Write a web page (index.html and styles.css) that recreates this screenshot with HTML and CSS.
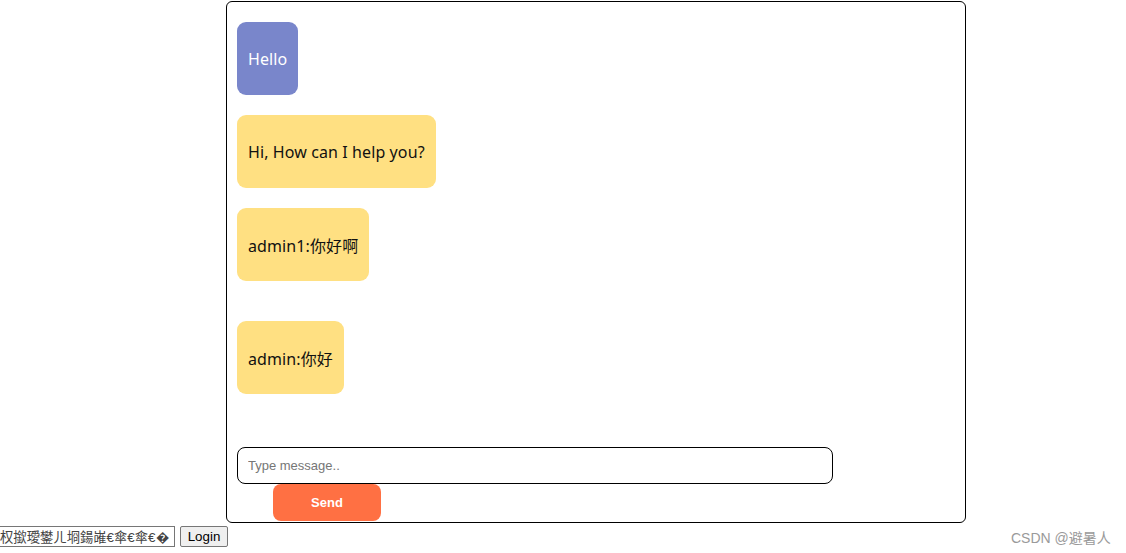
FILE: index.html
```html
<!DOCTYPE html>
<html>
<head>
<meta charset="utf-8">
<link rel="stylesheet" href="styles.css">
</head>
<body>
<div class="chat">
  <div class="msg bot">Hello</div>
  <div class="msg user">Hi, How can I help you?</div>
  <div class="msg user">admin1:你好啊</div>
  <div class="msg user far">admin:你好</div>
  <input class="typebox" type="text" placeholder="Type message..">
  <button class="send">Send</button>
</div>
<div class="login">
  <input class="name" type="text" value="权撳璦鐢ㄦ埛鍚嶉€傘€傘€�">
  <button class="loginbtn">Login</button>
</div>
<div class="mark">CSDN @避暑人</div>
</body>
</html>
```
FILE: styles.css
```css
html, body {
  margin: 0;
  padding: 0;
  background: #fff;
}
body {
  position: relative;
  width: 1126px;
  height: 553px;
  overflow: hidden;
  font-family: "Noto Sans", "Noto Sans CJK SC", sans-serif;
}
.chat {
  box-sizing: border-box;
  width: 740px;
  height: 522px;
  margin: 1px 0 0 226px;
  border: 1px solid #000;
  border-radius: 6px;
  padding: 0 10px;
  display: flex;
  flex-direction: column;
  align-items: flex-start;
}
.msg {
  box-sizing: border-box;
  height: 73px;
  margin-top: 20px;
  padding: 0 11px;
  border-radius: 9px;
  display: flex;
  align-items: center;
  font-size: 16px;
  letter-spacing: 0.1px;
  color: #111;
  white-space: nowrap;
}
.msg.bot {
  background: #7986cb;
  color: #fff;
}
.msg.user {
  background: #ffe082;
}
.msg.far {
  margin-top: 40px;
}
.typebox {
  box-sizing: border-box;
  width: 596px;
  height: 37px;
  margin-top: 53px;
  border: 1px solid #000;
  border-radius: 8px;
  padding: 0 10px;
  font-family: "Liberation Sans", Arial, sans-serif;
  font-size: 13px;
  outline: none;
}
.typebox::placeholder {
  color: #767676;
}
.send {
  box-sizing: border-box;
  width: 108px;
  height: 37px;
  margin-left: 36px;
  border: none;
  border-radius: 8px;
  background: #ff7043;
  color: #fff;
  font-family: "Liberation Sans", Arial, sans-serif;
  font-size: 13px;
  font-weight: bold;
}
.login {
  display: flex;
  align-items: center;
  gap: 5px;
  margin-top: 3px;
}
.name {
  box-sizing: border-box;
  width: 178px;
  height: 21px;
  margin-left: -3px;
  border: 1px solid #767676;
  padding: 1px 2px;
  font-family: "Liberation Sans", "Noto Sans CJK SC", sans-serif;
  font-size: 13.33px;
  color: #444;
}
.loginbtn {
  box-sizing: border-box;
  height: 21px;
  width: 48px;
  padding: 0 6px;
  border: 1px solid #767676;
  border-radius: 2px;
  background: #efefef;
  font-family: "Liberation Sans", Arial, sans-serif;
  font-size: 13.33px;
  color: #000;
}
.mark {
  position: absolute;
  left: 1011px;
  top: 527px;
  font-family: "Liberation Sans", "Noto Sans CJK SC", sans-serif;
  font-size: 14px;
  color: #9a9a9a;
}
```
